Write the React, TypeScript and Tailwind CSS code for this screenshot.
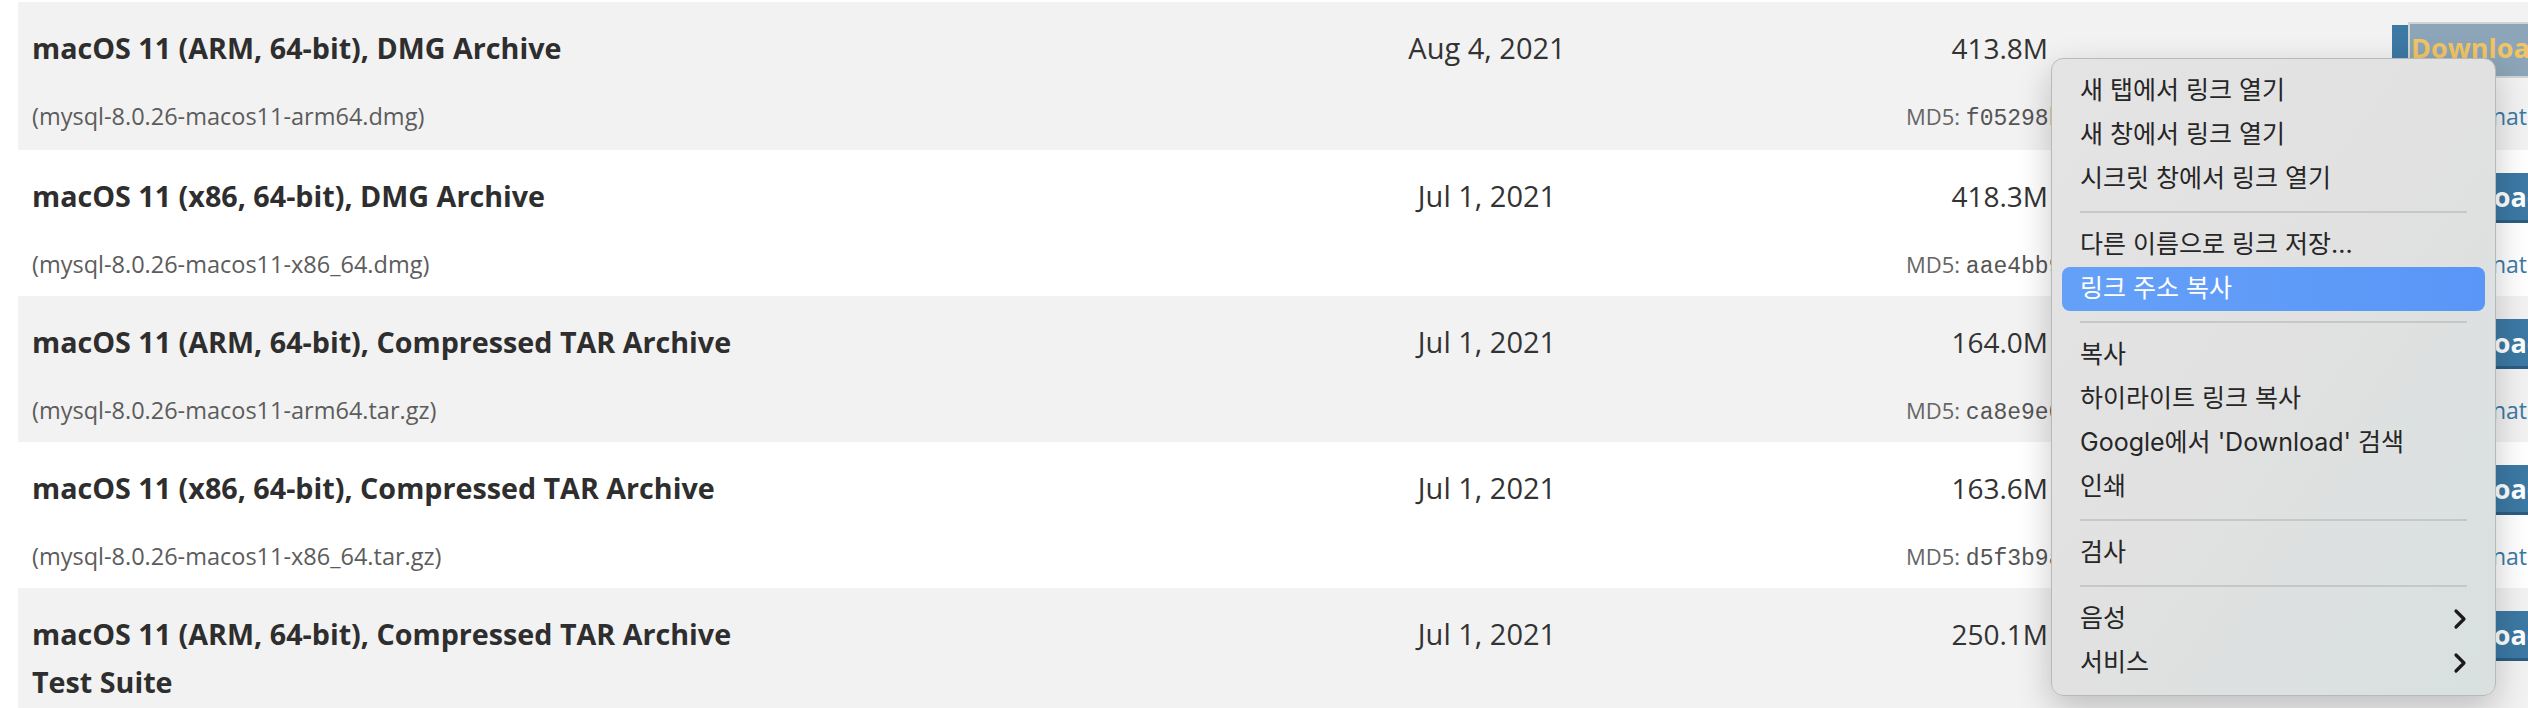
import { Fragment } from 'react';

type Row = {
  title: string[];
  file: string;
  date: string;
  size: string;
  md5: string;
};

const rows: Row[] = [
  { title: ['macOS 11 (ARM, 64-bit), DMG Archive'], file: '(mysql-8.0.26-macos11-arm64.dmg)', date: 'Aug 4, 2021', size: '413.8M', md5: 'f05298b6a1c43e0d7f2a9c81e6d3b705' },
  { title: ['macOS 11 (x86, 64-bit), DMG Archive'], file: '(mysql-8.0.26-macos11-x86_64.dmg)', date: 'Jul 1, 2021', size: '418.3M', md5: 'aae4bb91c0d27f3e85a6b4c19e7f2d30' },
  { title: ['macOS 11 (ARM, 64-bit), Compressed TAR Archive'], file: '(mysql-8.0.26-macos11-arm64.tar.gz)', date: 'Jul 1, 2021', size: '164.0M', md5: 'ca8e9e0f3b6d21a4c7e58f90d1b2a6c3' },
  { title: ['macOS 11 (x86, 64-bit), Compressed TAR Archive'], file: '(mysql-8.0.26-macos11-x86_64.tar.gz)', date: 'Jul 1, 2021', size: '163.6M', md5: 'd5f3b9a27c0e4d18f6b35a92e07c4b1d' },
  { title: ['macOS 11 (ARM, 64-bit), Compressed TAR Archive', 'Test Suite'], file: '(mysql-test-8.0.26-macos11-arm64.tar.gz)', date: 'Jul 1, 2021', size: '250.1M', md5: '7b1e0c93d4a6f25e8c0b17d3a9f46e52' },
];

const menu: (string | null)[] = [
  '새 탭에서 링크 열기',
  '새 창에서 링크 열기',
  '시크릿 창에서 링크 열기',
  null,
  '다른 이름으로 링크 저장...',
  '링크 주소 복사',
  null,
  '복사',
  '하이라이트 링크 복사',
  "Google에서 'Download' 검색",
  '인쇄',
  null,
  '검사',
  null,
  '음성',
  '서비스',
];

function Chevron() {
  return (
    <svg width="14" height="22" viewBox="0 0 14 22" className="text-[#1a1a1a]">
      <polyline points="3,3 11,11 3,19" fill="none" stroke="currentColor" strokeWidth="3.2" strokeLinecap="round" strokeLinejoin="round" />
    </svg>
  );
}

function DownloadButton({ active }: { active: boolean }) {
  return (
    <div className="relative mt-[1px] h-[50px] w-[170px] bg-[#3c79a4] border-b-[3px] border-[#2b5d82]">
      {active ? (
        <div className="absolute left-[16px] top-[-3px] h-[56px] w-[170px] bg-[#8ca5b8] border-[2px] border-[#d3d3d3] pl-[1px] text-[#f2c563] font-bold text-[27px] leading-[48px]">
          Download
        </div>
      ) : (
        <span className="block pl-[16px] text-white font-bold text-[27px] leading-[47px]">Download</span>
      )}
    </div>
  );
}

function ContextMenu() {
  return (
    <div className="absolute left-[2051px] top-[58px] w-[445px] h-[638px] rounded-[12px] bg-gradient-to-br from-[#e4e4e4] via-[#e1e1e1] to-[#d8e0e0] border border-[#b9b9b9] shadow-[0_12px_34px_rgba(0,0,0,0.22)] pt-[10px] text-[#262626] font-['Inter','Noto_Sans_CJK_KR',sans-serif] text-[25px]">
      {menu.map((item, i) =>
        item === null ? (
          <div key={i} className="h-[22px] flex items-center px-[28px]">
            <div className="h-[2px] w-full bg-[#c6c8c8]" />
          </div>
        ) : (
          <div
            key={i}
            className={
              item === '링크 주소 복사'
                ? 'mx-[10px] h-[44px] rounded-[8px] bg-gradient-to-r from-[#65a0f8] to-[#5996f7] px-[18px] flex items-center text-white'
                : 'mx-[10px] h-[44px] px-[18px] flex items-center justify-between'
            }
          >
            <span>{item}</span>
            {(item === '음성' || item === '서비스') && (
              <span className="flex">
                <Chevron />
              </span>
            )}
          </div>
        )
      )}
    </div>
  );
}

export default function App() {
  return (
    <div className="relative w-[2528px] h-[708px] overflow-hidden bg-white font-['Open_Sans',sans-serif] text-[#333]">
      <div className="pl-[18px] pt-[2px]">
        {rows.map((r, i) => (
          <div
            key={i}
            className={
              (i % 2 === 0 ? 'bg-[#f2f2f2] ' : 'bg-white ') +
              (i === 0 ? 'h-[148px] ' : 'h-[146px] ') +
              (r.title.length > 1 ? 'grid-rows-[96px_auto] ' : 'grid-rows-[48px_auto] ') +
              'grid grid-cols-[1369px_200px_319px_142px_344px_1fr] pt-[22px]'
            }
          >
            <div className="pl-[14px] font-bold text-[28.7px] leading-[48px] text-[#2e2e2e] whitespace-nowrap">
              {r.title.map((t, j) => (
                <Fragment key={j}>
                  {t}
                  {j < r.title.length - 1 && <br />}
                </Fragment>
              ))}
            </div>
            <div className="text-center text-[29px] leading-[48px] whitespace-nowrap">{r.date}</div>
            <div />
            <div className="text-right text-[28px] leading-[48px] whitespace-nowrap">{r.size}</div>
            <div />
            <div>
              <DownloadButton active={i === 0} />
            </div>

            <div className="pl-[14px] mt-[28px] text-[23.5px] leading-[32px] text-[#5c5c5c] whitespace-nowrap">{r.file}</div>
            <div />
            <div />
            <div className="mt-[28px] whitespace-nowrap text-[22px] leading-[32px] text-[#666]">
              MD5: <code className="font-['Liberation_Mono',monospace] text-[23px] text-[#555]">{r.md5}</code>
            </div>
            <div />
            <div className="mt-[28px] pl-[69px] text-[23px] leading-[32px] text-[#3b79a6] whitespace-nowrap">Signature</div>
          </div>
        ))}
      </div>
      <ContextMenu />
    </div>
  );
}
